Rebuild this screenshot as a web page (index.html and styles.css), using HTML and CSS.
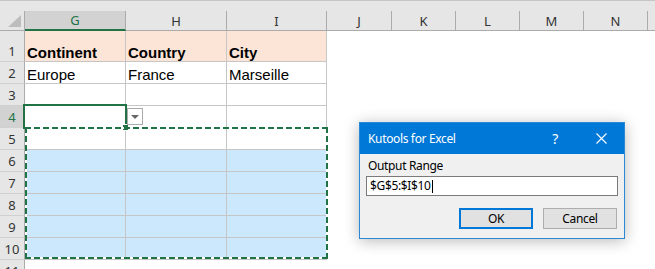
FILE: index.html
```html
<!DOCTYPE html>
<html lang="en">
<head>
  <meta charset="UTF-8" />
  <meta name="viewport" content="width=device-width, initial-scale=1.0"/>
  <title>Kutools - Output Range</title>
  <link rel="stylesheet" href="styles.css">
</head>
<body>
  <div class="sheet">
    <div class="topbar"></div>
    <div class="grid">
      <div class="corner"><span class="tri"></span></div>
      <div class="colhead sel">G</div>
      <div class="colhead">H</div>
      <div class="colhead">I</div>
      <div class="colhead">J</div>
      <div class="colhead">K</div>
      <div class="colhead">L</div>
      <div class="colhead">M</div>
      <div class="colhead">N</div>
      <div class="colhead last"></div>

      <div class="rowhead">1</div>
      <div class="cell head">Continent</div>
      <div class="cell head">Country</div>
      <div class="cell head">City</div>
      <div class="blank"></div>

      <div class="rowhead">2</div>
      <div class="cell">Europe</div>
      <div class="cell">France</div>
      <div class="cell">Marseille</div>
      <div class="blank"></div>

      <div class="rowhead">3</div>
      <div class="cell"></div>
      <div class="cell"></div>
      <div class="cell"></div>
      <div class="blank"></div>

      <div class="rowhead sel">4</div>
      <div class="cell"></div>
      <div class="cell"></div>
      <div class="cell"></div>
      <div class="blank"></div>

      <div class="rowhead">5</div>
      <div class="cell"></div>
      <div class="cell"></div>
      <div class="cell"></div>
      <div class="blank"></div>

      <div class="rowhead">6</div>
      <div class="cell fill"></div>
      <div class="cell fill"></div>
      <div class="cell fill"></div>
      <div class="blank"></div>

      <div class="rowhead">7</div>
      <div class="cell fill"></div>
      <div class="cell fill"></div>
      <div class="cell fill"></div>
      <div class="blank"></div>

      <div class="rowhead">8</div>
      <div class="cell fill"></div>
      <div class="cell fill"></div>
      <div class="cell fill"></div>
      <div class="blank"></div>

      <div class="rowhead">9</div>
      <div class="cell fill"></div>
      <div class="cell fill"></div>
      <div class="cell fill"></div>
      <div class="blank"></div>

      <div class="rowhead">10</div>
      <div class="cell fill"></div>
      <div class="cell fill"></div>
      <div class="cell fill"></div>
      <div class="blank"></div>

      <div class="rowhead">11</div>
      <div class="blank wide"></div>
    </div>

    <div class="active-cell"><span class="fill-handle"></span></div>
    <div class="dropdown"><span class="arrow"></span></div>
    <div class="copy-range"></div>
  </div>

  <div class="dialog">
    <div class="dialog-title">
      <span class="dialog-name">Kutools for Excel</span>
      <span class="title-btn">?</span>
      <span class="title-btn">
        <svg width="11" height="11" viewBox="0 0 11 11">
          <path d="M0.5 0.5 L10.5 10.5 M10.5 0.5 L0.5 10.5" stroke="#fff" stroke-width="1.1" fill="none"/>
        </svg>
      </span>
    </div>
    <div class="dialog-body">
      <div class="field-label">Output Range</div>
      <div class="field">$G$5:$I$10<span class="caret"></span></div>
      <div class="actions">
        <button class="btn default">OK</button>
        <button class="btn">Cancel</button>
      </div>
    </div>
  </div>
</body>
</html>
```

FILE: styles.css
```css
* {
  box-sizing: border-box;
}
body {
  margin: 0;
  width: 655px;
  height: 269px;
  overflow: hidden;
  position: relative;
  background: #fff;
  font-family: "Liberation Sans", Arial, sans-serif;
}
.sheet {
  position: relative;
}
.topbar {
  height: 11px;
  background: #e6e6e6;
  border-top: 1px solid #c6c6c6;
}
.grid {
  display: grid;
  grid-template-columns: 25px 101px 101px 100px 65px 64px 64px 64px 64px 1fr;
  grid-template-rows: 20px 31px repeat(11, 22px);
}
.corner {
  background: #e6e6e6;
  border-right: 1px solid #ababab;
  border-bottom: 1px solid #ababab;
  position: relative;
}
.tri {
  position: absolute;
  right: 3px;
  bottom: 3px;
  width: 13px;
  height: 12px;
  background: #bdbdbd;
  clip-path: polygon(100% 0, 100% 100%, 0 100%);
}
.colhead {
  background: #e6e6e6;
  border-right: 1px solid #ababab;
  border-bottom: 1px solid #ababab;
  font-family: "Noto Sans", sans-serif;
  font-size: 13px;
  color: #333;
  display: flex;
  align-items: center;
  justify-content: center;
}
.colhead.sel {
  background: #d2d2d2;
  color: #217346;
  border-bottom: 2px solid #217346;
}
.colhead.last {
  border-right: none;
}
.rowhead {
  background: #e6e6e6;
  border-right: 1px solid #ababab;
  border-bottom: 1px solid #d0d0d0;
  font-family: "Noto Sans", sans-serif;
  font-size: 13px;
  line-height: 17px;
  color: #333;
  display: flex;
  align-items: flex-end;
  justify-content: center;
  padding-bottom: 1px;
}
.rowhead.sel {
  background: #d2d2d2;
  color: #217346;
}
.cell {
  border-right: 1px solid #c6c6c6;
  border-bottom: 1px solid #c6c6c6;
  font-size: 15px;
  line-height: 17px;
  color: #000;
  padding-left: 2px;
  display: flex;
  align-items: flex-end;
  white-space: nowrap;
}
.cell.head {
  background: #fce4d6;
  font-weight: bold;
}
.cell.fill {
  background: #cce8fc;
}
.blank {
  grid-column: 5 / -1;
}
.blank.wide {
  grid-column: 2 / -1;
}
.active-cell {
  position: absolute;
  left: 23px;
  top: 104px;
  width: 104px;
  height: 25px;
  border: 2px solid #217346;
}
.fill-handle {
  position: absolute;
  right: -3px;
  bottom: -3px;
  width: 5px;
  height: 5px;
  background: #217346;
  outline: 1px solid #fff;
}
.dropdown {
  position: absolute;
  left: 127px;
  top: 108px;
  width: 16px;
  height: 17px;
  background: #fff;
  border: 1px solid #ababab;
  display: flex;
  align-items: center;
  justify-content: center;
}
.arrow {
  width: 0;
  height: 0;
  border-left: 4px solid transparent;
  border-right: 4px solid transparent;
  border-top: 4px solid #666;
}
.copy-range {
  position: absolute;
  left: 25px;
  top: 127px;
  width: 303px;
  height: 132px;
  background:
    repeating-linear-gradient(90deg, #217346 0 6px, #fff 6px 9px) left top / 100% 2px no-repeat,
    repeating-linear-gradient(90deg, #217346 0 6px, #fff 6px 9px) left bottom / 100% 2px no-repeat,
    repeating-linear-gradient(180deg, #217346 0 6px, #fff 6px 9px) left top / 2px 100% no-repeat,
    repeating-linear-gradient(180deg, #217346 0 6px, #fff 6px 9px) right top / 2px 100% no-repeat;
}
.dialog {
  position: absolute;
  left: 359px;
  top: 122px;
  width: 266px;
  height: 117px;
  border: 1px solid #2b88d8;
  background: #f0f0f0;
  box-shadow: 0 2px 14px rgba(0, 0, 0, 0.28);
  font-family: "Noto Sans", sans-serif;
  font-size: 12px;
  letter-spacing: -0.35px;
  color: #000;
}
.dialog-title {
  height: 31px;
  background: #0078d7;
  color: #fff;
  display: flex;
  align-items: center;
  padding-left: 8px;
}
.dialog-name {
  flex: 1;
}
.title-btn {
  width: 46px;
  height: 31px;
  display: flex;
  align-items: center;
  justify-content: center;
  font-size: 14px;
}
.dialog-body {
  padding: 0 6px;
}
.field-label {
  margin-top: 4px;
  padding-left: 2px;
  line-height: 16px;
}
.field {
  margin-top: 2px;
  height: 20px;
  background: #fff;
  border: 1px solid #7a7a7a;
  padding-left: 3px;
  line-height: 18px;
  display: flex;
  align-items: center;
}
.caret {
  width: 1px;
  height: 13px;
  background: #000;
  margin-left: 1px;
}
.actions {
  margin-top: 12px;
  display: flex;
  justify-content: flex-end;
  gap: 10px;
  padding-right: 1px;
}
.btn {
  width: 74px;
  height: 21px;
  background: #e1e1e1;
  border: 1px solid #adadad;
  font-family: "Noto Sans", sans-serif;
  font-size: 12px;
  letter-spacing: -0.35px;
  color: #000;
  padding: 0;
}
.btn.default {
  border: 2px solid #0078d7;
}
```
